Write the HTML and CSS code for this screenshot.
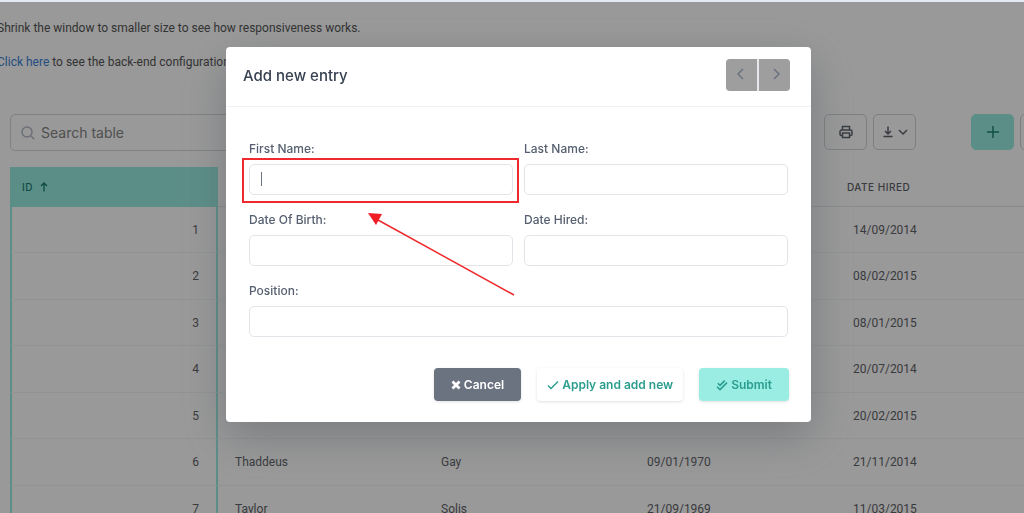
FILE: index.html
```html
<!DOCTYPE html>
<html lang="en">
<head>
  <meta charset="UTF-8" />
  <meta name="viewport" content="width=device-width, initial-scale=1.0" />
  <title>Add new entry</title>
  <link rel="stylesheet" href="styles.css">
</head>
<body>

<div class="topbar"></div>

<main class="page">
  <div class="intro">
    <p>Shrink the window to smaller size to see how responsiveness works.</p>
    <p><a href="#">Click here</a> to see the back-end configuration</p>
  </div>

  <div class="toolbar">
    <label class="search">
      <svg width="16" height="16" viewBox="0 0 16 16" aria-hidden="true"><circle cx="7" cy="7" r="5"/><path d="M10.8 10.8 14.2 14.2"/></svg>
      <input type="search" placeholder="Search table" aria-label="Search table" />
    </label>
    <div class="tools">
      <button class="tool" type="button" aria-label="Print">
        <svg width="14" height="14" viewBox="0 0 14 14"><path d="M3.5 5V1.5h7V5M3.5 10.5H2.3A1.3 1.3 0 0 1 1 9.200V6.500A1.500 1.500 0 0 1 2.500 5h9A1.500 1.500 0 0 1 13 6.500v2.700a1.300 1.300 0 0 1-1.300 1.300h-1.200M3.500 8h7v4.500h-7z"/></svg>
      </button>
      <button class="tool" type="button" aria-label="Export">
        <svg width="12" height="14" viewBox="0 0 12 14"><path d="M6 1.500v7M3 6l3 3 3-3M1.500 11.500h9"/></svg>
        <svg width="10" height="14" viewBox="0 0 10 14"><path d="M1 5l4 4 4-4"/></svg>
      </button>
    </div>
    <div class="tools">
      <button class="tool tool-add" type="button" aria-label="Add">
        <svg width="14" height="14" viewBox="0 0 14 14"><path d="M7 1v12M1 7h12"/></svg>
      </button>
      <button class="tool" type="button" aria-label="More"></button>
    </div>
  </div>

  <table class="entries">
    <thead>
      <tr>
        <th class="id">ID <svg width="8" height="10" viewBox="0 0 8 10" aria-hidden="true"><path d="M4 9.500V1M1 4l3-3 3 3"/></svg></th>
        <th></th><th></th><th></th>
        <th>Date Hired</th>
      </tr>
    </thead>
    <tbody>
      <tr><td class="id">1</td><td></td><td></td><td></td><td>14/09/2014</td></tr>
      <tr><td class="id">2</td><td></td><td></td><td></td><td>08/02/2015</td></tr>
      <tr><td class="id">3</td><td></td><td></td><td></td><td>08/01/2015</td></tr>
      <tr><td class="id">4</td><td></td><td></td><td></td><td>20/07/2014</td></tr>
      <tr><td class="id">5</td><td></td><td></td><td></td><td>20/02/2015</td></tr>
      <tr><td class="id">6</td><td>Thaddeus</td><td>Gay</td><td>09/01/1970</td><td>21/11/2014</td></tr>
      <tr><td class="id">7</td><td>Taylor</td><td>Solis</td><td>21/09/1969</td><td>11/03/2015</td></tr>
    </tbody>
  </table>
</main>

<div class="overlay">
  <form class="dialog" role="dialog" aria-labelledby="dialog-title">
    <header class="dialog-header">
      <h2 id="dialog-title">Add new entry</h2>
      <div class="pager">
        <button type="button" aria-label="Previous entry"><svg width="12" height="12" viewBox="0 0 12 12"><path d="M7 1 2 6l5 5"/></svg></button>
        <button type="button" aria-label="Next entry"><svg width="12" height="12" viewBox="0 0 12 12"><path d="M5 1l5 5-5 5"/></svg></button>
      </div>
    </header>

    <div class="fields">
      <div class="field">
        <label for="first-name">First Name:</label>
        <div class="marked">
          <input type="text" id="first-name" />
          <span class="caret"></span>
        </div>
      </div>
      <div class="field">
        <label for="last-name">Last Name:</label>
        <input type="text" id="last-name" />
      </div>
      <div class="field">
        <label for="birth">Date Of Birth:</label>
        <input type="text" id="birth" />
      </div>
      <div class="field">
        <label for="hired">Date Hired:</label>
        <input type="text" id="hired" />
      </div>
      <div class="field wide">
        <label for="position">Position:</label>
        <input type="text" id="position" />
      </div>
      <svg class="arrow" width="148" height="84" viewBox="0 0 148 84" aria-hidden="true">
        <path class="shaft" d="M10 7 146 82"/>
        <path class="head" d="M0 0 14 1 8 12z"/>
      </svg>
    </div>

    <footer class="actions">
      <button class="btn btn-cancel" type="button">
        <svg width="10" height="10" viewBox="0 0 10 10"><path d="M1.500 1.500l7 7M8.500 1.500l-7 7"/></svg>
        Cancel
      </button>
      <button class="btn btn-apply" type="button">
        <svg width="12" height="10" viewBox="0 0 12 10"><path d="M1 5.500 4 8.500 11 1.500"/></svg>
        Apply and add new
      </button>
      <button class="btn btn-submit" type="submit">
        <svg width="12" height="12" viewBox="0 0 12 12"><path d="M1.800 4.200 4 6.400 8.800 1.600M1 7.800 4 10.600 11 3.600"/></svg>
        Submit
      </button>
    </footer>
  </form>
</div>

</body>
</html>
```
FILE: styles.css
```css
* {
  box-sizing: border-box;
}
body {
  margin: 0;
  height: 100vh;
  overflow: hidden;
  background: #fff;
  color: #5f6368;
  font-family: Roboto, sans-serif;
  font-size: 12px;
}
button, input {
  font-family: Inter, sans-serif;
}
svg {
  fill: none;
  stroke: currentColor;
  flex: none;
}
.topbar {
  height: 2px;
  background: #e3eaf5;
}

/* page behind the dialog */
.page {
  padding-left: 10px;
}
.intro {
  margin-left: -13px;
  padding-top: 17px;
  color: #555;
}
.intro p {
  margin: 0 0 16px;
  line-height: 18px;
}
.intro a {
  color: #3b82d6;
  text-decoration: none;
}
.toolbar {
  display: flex;
  gap: 55px;
  margin: 43px -39px 16px 0;
}
.search {
  flex: 1;
  max-width: 600px;
  height: 37px;
  display: flex;
  align-items: center;
  gap: 5px;
  padding-left: 9px;
  border: 1px solid #d5d7dc;
  border-radius: 5px;
  color: #b4bac5;
}
.search svg {
  stroke-width: 1.5;
}
.search input {
  flex: 1;
  border: 0;
  padding: 0;
  background: none;
  font-size: 14px;
}
.search input::placeholder {
  color: #858585;
}
.tools {
  display: flex;
  gap: 6px;
}
.search + .tools {
  margin-left: auto;
}
.tool {
  width: 43px;
  height: 36px;
  display: flex;
  align-items: center;
  justify-content: center;
  gap: 4px;
  padding: 0;
  border: 1px solid #d1d3d8;
  border-radius: 5px;
  background: #fff;
  color: #5f6670;
}
.tool svg {
  stroke-width: 1.5;
}
.tool-add {
  border-color: #9aede3;
  background: #9aede3;
  color: #1c8478;
}
.entries {
  width: calc(100% + 18px);
  table-layout: fixed;
  border-collapse: separate;
  border-spacing: 0;
}
.entries th {
  height: 40px;
  padding: 0 11px;
  border-bottom: 1px solid #e5e7eb;
  font: 500 10px Inter, sans-serif;
  letter-spacing: 0.05em;
  text-align: left;
  text-transform: uppercase;
}
.entries td {
  height: 47px;
  padding: 0 17px;
  border-bottom: 1px solid #f3f4f6;
}
.entries tr:nth-child(odd) td {
  height: 46px;
}
.entries .id {
  border-left: 2px solid #9aede3;
  border-right: 2px solid #9aede3;
}
.entries th.id {
  width: 208px;
  padding-left: 10px;
  background: #9aede3;
  border-color: #9aede3;
  color: #1c7c72;
}
.entries th.id svg {
  margin-left: 4px;
  vertical-align: -1px;
  stroke-width: 1.3;
}
.entries td.id {
  text-align: right;
}

/* dialog */
.overlay {
  position: fixed;
  inset: 2px 0 0;
  display: flex;
  justify-content: center;
  align-items: flex-start;
  padding: 45px 0 0 13px;
  background: rgba(0, 0, 0, 0.4);
}
.dialog {
  width: 90%;
  max-width: 585px;
  border-radius: 4px;
  background: #fff;
  box-shadow: 0 14px 44px rgba(80, 86, 94, 0.45);
  font-family: Inter, sans-serif;
}
.dialog-header {
  display: flex;
  align-items: center;
  justify-content: space-between;
  padding: 12px 21px 15px 17px;
  border-bottom: 1px solid #f0f1f6;
}
.dialog-header h2 {
  margin: 0;
  color: #374151;
  font-size: 15px;
  font-weight: 500;
}
.pager {
  display: flex;
  gap: 2px;
  border-radius: 4px;
  overflow: hidden;
  background: #e5e7eb;
}
.pager button {
  width: 31px;
  height: 32px;
  padding: 0;
  border: 0;
  background: #9e9e9e;
  color: #6b7280;
}
.pager svg {
  stroke-width: 1.5;
}
.fields {
  position: relative;
  display: grid;
  grid-template-columns: 1fr 1fr;
  gap: 14px 11px;
  padding: 31px 23px;
}
.wide {
  grid-column: 1 / -1;
}
.field label {
  display: block;
  margin-bottom: 5px;
  color: #566070;
  font-size: 12px;
  font-weight: 500;
  line-height: 21px;
}
.field input {
  display: block;
  width: 100%;
  height: 31px;
  padding: 0 12px;
  border: 1px solid #e2e4ea;
  border-radius: 5px;
  font-size: 12px;
}
.marked {
  position: relative;
}
.marked::after {
  content: "";
  position: absolute;
  inset: -6px -6px -8px -7px;
  border: 2px solid #ee2a2e;
  pointer-events: none;
}
.caret {
  position: absolute;
  left: 12px;
  top: 8px;
  width: 1px;
  height: 14px;
  background: #6b7280;
}
.arrow {
  position: absolute;
  left: 142px;
  top: 106px;
  pointer-events: none;
}
.arrow .shaft {
  stroke: #ee2a2e;
  stroke-width: 1.5;
}
.arrow .head {
  fill: #ee1c24;
  stroke: none;
}
.actions {
  display: flex;
  justify-content: flex-end;
  gap: 16px;
  padding: 0 22px 21px;
}
.btn {
  height: 33px;
  display: flex;
  align-items: center;
  gap: 3px;
  padding: 0 17px;
  border: 0;
  border-radius: 4px;
  font-size: 12px;
  font-weight: 600;
  box-shadow: 0 1px 3px rgba(0, 0, 0, 0.12);
}
.btn svg {
  stroke-width: 1.5;
}
.btn-cancel {
  background: #6b7280;
  color: #fff;
}
.btn-cancel svg {
  stroke-width: 2.8;
}
.btn-apply {
  padding: 0 10px;
  background: #fff;
  color: #2a9d8f;
}
.btn-submit {
  background: #9aede3;
  color: #2a9d8f;
}
```
